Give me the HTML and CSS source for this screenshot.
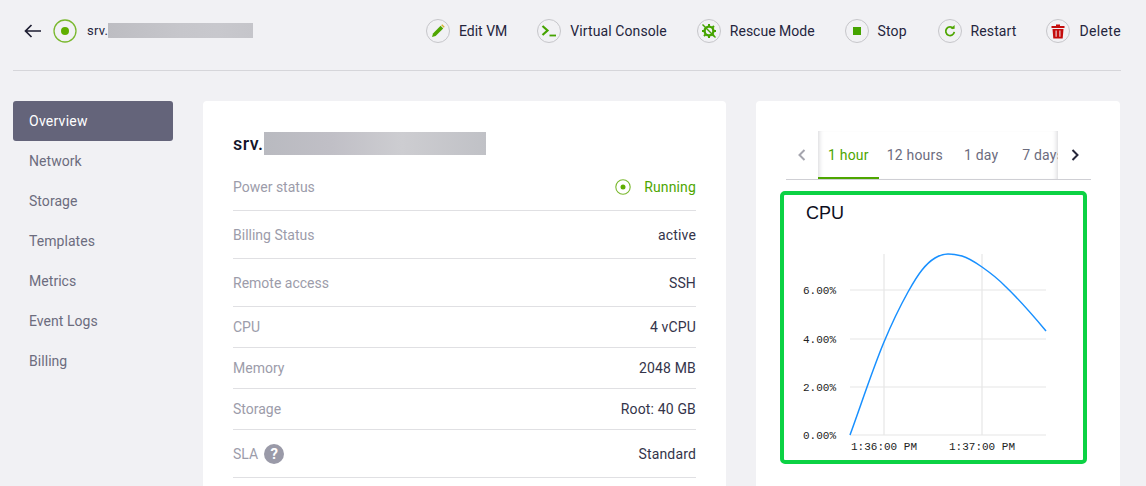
FILE: index.html
```html
<!DOCTYPE html>
<html lang="en">
<head>
<meta charset="utf-8">
<title>VM Overview</title>
<link rel="stylesheet" href="styles.css">
</head>
<body>
<header class="topbar">
  <div class="identity">
    <svg class="back" width="18" height="14" viewBox="0 0 18 14"><path d="M17 7H2M7.5 1 1.5 7l6 6" fill="none" stroke="#1e1e32" stroke-width="1.7"/></svg>
    <svg class="status" width="24" height="24" viewBox="0 0 24 24"><circle cx="12" cy="12" r="11" fill="none" stroke="#7ab82e" stroke-width="1.3"/><circle cx="12" cy="12" r="4" fill="#5fae00"/></svg>
    <span class="host">srv.</span><span class="redact redact-sm"></span>
  </div>
  <nav class="actions">
    <a class="action"><span class="ring"><svg width="14" height="14" viewBox="0 0 14 14"><path d="M1 13l1-3.6L9.6 1.8l2.6 2.6L4.6 12z" fill="#4ea600"/><path d="M10.2 1.2l1-.9 2.5 2.5-.9 1z" fill="#d8b12f"/></svg></span><span class="label label-tight">Edit VM</span></a>
    <a class="action"><span class="ring"><svg width="16" height="14" viewBox="0 0 16 14"><path d="M1.5 2 6.5 6.5l-5 4.5" fill="none" stroke="#45a300" stroke-width="2.2"/><path d="M8.5 11.5H15" stroke="#45a300" stroke-width="1.8"/></svg></span><span class="label">Virtual Console</span></a>
    <a class="action"><span class="ring"><svg width="16" height="16" viewBox="0 0 16 16"><circle cx="8" cy="8" r="4.4" fill="none" stroke="#45a300" stroke-width="2.4"/><path d="M8 1v3M8 12v3M1 8h3M12 8h3M13 3l-2 2M5 11l-2 2M13 13l-2-2" stroke="#45a300" stroke-width="2"/><path d="M1.5 1.5l13 13" stroke="#45a300" stroke-width="1.4"/></svg></span><span class="label label-tight">Rescue Mode</span></a>
    <a class="action action-stop"><span class="ring"><span class="stop-square"></span></span><span class="label">Stop</span></a>
    <a class="action"><span class="ring"><svg width="12" height="12" viewBox="0 0 14 14"><path d="M11 4.2A5 5 0 1 0 12 8" fill="none" stroke="#4ea600" stroke-width="2"/><path d="M7.6 4.4h4.8V0z" fill="#4ea600"/></svg></span><span class="label">Restart</span></a>
    <a class="action"><span class="ring"><svg width="14" height="16" viewBox="0 0 14 16"><path d="M5 1.5h4V3h4.5v2H.5V3H5z" fill="#c40c0c"/><path d="M1.5 6h11l-.8 9.5H2.3zM4.6 7.6v6.2h1V7.6zM8.4 7.6v6.2h1V7.6z" fill="#c40c0c" fill-rule="evenodd"/></svg></span><span class="label label-wide">Delete</span></a>
  </nav>
</header>

<div class="layout">
  <aside class="sidenav">
    <a class="navitem is-active">Overview</a>
    <a class="navitem">Network</a>
    <a class="navitem">Storage</a>
    <a class="navitem">Templates</a>
    <a class="navitem">Metrics</a>
    <a class="navitem">Event Logs</a>
    <a class="navitem">Billing</a>
  </aside>

  <main class="card details">
    <h1 class="title"><span>srv.</span><span class="redact redact-lg"></span></h1>
    <div class="row tall"><span class="key">Power status</span><span class="val running"><svg width="16" height="16" viewBox="0 0 16 16"><circle cx="8" cy="8" r="7.2" fill="none" stroke="#7ab82e" stroke-width="1.1"/><circle cx="8" cy="8" r="2.5" fill="#5fae00"/></svg><span>Running</span></span></div>
    <div class="row tall"><span class="key">Billing Status</span><span class="val">active</span></div>
    <div class="row tall"><span class="key">Remote access</span><span class="val">SSH</span></div>
    <div class="row"><span class="key">CPU</span><span class="val">4 vCPU</span></div>
    <div class="row"><span class="key">Memory</span><span class="val">2048 MB</span></div>
    <div class="row"><span class="key">Storage</span><span class="val">Root: 40 GB</span></div>
    <div class="row tall"><span class="key">SLA <span class="help">?</span></span><span class="val">Standard</span></div>
  </main>

  <section class="card metrics">
    <div class="tabbar">
      <svg class="chev chev-left" width="10" height="12" viewBox="0 0 10 12"><path d="M7.5 1 2.5 6l5 5" fill="none" stroke="#a5a5ae" stroke-width="2"/></svg>
      <div class="tabs">
        <a class="tab is-active">1 hour</a>
        <a class="tab tab-12h">12 hours</a>
        <a class="tab tab-1d">1 day</a>
        <a class="tab tab-7d">7 days</a>
      </div>
      <svg class="chev chev-right" width="10" height="12" viewBox="0 0 10 12"><path d="M2.5 1l5 5-5 5" fill="none" stroke="#26263a" stroke-width="2"/></svg>
    </div>
    <div class="chartbox">
      <div class="charttitle">CPU</div>
      <svg class="chart" width="299" height="224" viewBox="0 0 299 224">
        <g stroke="#e6e6e6" stroke-width="1.2" fill="none">
          <path d="M66 58H262M66 107H262M66 155H262M66 203H262"/>
          <path d="M100 22V203M198 22V203"/>
        </g>
        <path d="M66 203C77.3 172 88.7 137 100 110C108 90.8 116 74.4 124 60C128.7 51.6 133.3 43.8 138 38C142.3 32.6 146.7 28.6 151 26C155.3 23.4 159.7 22 164 22C168.7 22 173.3 22.8 178 24C184.7 25.9 191.3 30.3 198 35C205.7 40.4 213.3 46 221 54C234.7 67 248.3 82.6 262 99" fill="none" stroke="#1890ff" stroke-width="1.5"/>
        <g class="ticks">
          <text x="52" y="62" text-anchor="end">6.00%</text>
          <text x="52" y="111" text-anchor="end">4.00%</text>
          <text x="52" y="159" text-anchor="end">2.00%</text>
          <text x="52" y="207" text-anchor="end">0.00%</text>
          <text x="67" y="218">1:36:00 PM</text>
          <text x="165" y="218">1:37:00 PM</text>
        </g>
      </svg>
    </div>
  </section>
</div>
</body>
</html>
```

FILE: styles.css
```css
html, body {
  margin: 0;
  height: 486px;
  overflow: hidden;
}
body {
  background: #f1f1f4;
  color: #25253d;
  font-family: "Roboto", "Liberation Sans", sans-serif;
  font-size: 14px;
}
a { color: inherit; text-decoration: none; }

.topbar {
  display: flex;
  justify-content: space-between;
  align-items: center;
  height: 71px;
  margin: 0 25px 0 13px;
  padding-bottom: 9px;
  box-sizing: border-box;
  border-bottom: 1px solid #d6d6da;
}
.identity {
  display: flex;
  align-items: center;
  padding-left: 11px;
}
.back { margin-right: 11px; }
.status { margin-right: 10px; }
.host { font-size: 13px; letter-spacing: 0.25px; }
.redact { display: inline-block; }
.redact-sm {
  width: 145px;
  height: 15px;
  background: linear-gradient(90deg, #bdbdc2, #c6c6cb 50%, #c8c8cd 75%, #c5c5ca);
}
.redact-lg {
  width: 222px;
  height: 23px;
  background: linear-gradient(90deg, #b9bac0, #c0bfc6 30%, #cdcdd1 62%, #c0c1c6);
}

.actions { display: flex; gap: 30px; }
.action { display: flex; align-items: center; gap: 9px; line-height: 24px; letter-spacing: 0.1px; }
.action-stop { margin-right: 1px; }
.ring {
  display: flex;
  align-items: center;
  justify-content: center;
  width: 24px;
  height: 24px;
  box-sizing: border-box;
  border: 1px solid #c6c6ca;
  border-radius: 50%;
}
.stop-square { width: 8px; height: 8px; background: #45a300; }
.label { white-space: nowrap; }
.label-wide { letter-spacing: 0.35px; }
.label-tight { letter-spacing: 0; }

.layout {
  display: flex;
  gap: 30px;
  align-items: flex-start;
  padding: 30px 26px 0 13px;
}
.sidenav { width: 160px; flex: none; }
.navitem {
  display: flex;
  align-items: center;
  height: 40px;
  padding-left: 16px;
  color: #6c6c7e;
  letter-spacing: 0.05px;
}
.navitem.is-active {
  background: #64647a;
  color: #fff;
  border-radius: 3px;
  letter-spacing: 0.25px;
}

.card {
  background: #fff;
  border-radius: 4px;
  box-sizing: border-box;
  height: 420px;
}
.details { width: 523px; flex: none; padding: 30px 30px 0; }
.title {
  display: flex;
  align-items: center;
  margin: 0 0 7px;
  font-size: 18px;
  line-height: 25px;
  font-weight: 500;
  color: #14142a;
  letter-spacing: 0.5px;
}
.row {
  display: flex;
  justify-content: space-between;
  align-items: center;
  height: 41px;
  box-sizing: border-box;
  border-bottom: 1px solid #e0e0e3;
}
.row.tall { height: 48px; }
.key { display: flex; align-items: center; gap: 6px; color: #9c9caa; }
.val { color: #34344a; letter-spacing: 0.15px; }
.running { display: flex; align-items: center; gap: 13px; color: #4ea600; }
.help {
  display: flex;
  align-items: center;
  justify-content: center;
  width: 20px;
  height: 20px;
  border-radius: 50%;
  background: #9a9aa8;
  color: #fff;
  font-weight: 700;
  font-size: 15px;
}

.metrics { width: 364px; flex: none; padding: 30px 29px 0 24px; }
.tabbar {
  display: flex;
  align-items: stretch;
  height: 49px;
  margin-left: 6px;
  border-bottom: 1px solid #cfcfd4;
  box-sizing: border-box;
}
.chev { flex: none; align-self: center; }
.chev-left { margin: 0 11px; }
.chev-right { margin: 0 11px 0 12px; }
.tabs {
  display: flex;
  flex: 1;
  min-width: 0;
  overflow: hidden;
  box-shadow: inset 5px 0 5px -4px #d4d4d8, inset -5px 0 5px -4px #d4d4d8;
}
.tab {
  display: flex;
  flex: none;
  align-items: center;
  padding: 0 10px;
  height: 48px;
  box-sizing: border-box;
  color: #6c6c7e;
  letter-spacing: 0.2px;
}
.tab-12h { margin-left: -2px; }
.tab-1d { margin-left: 1px; }
.tab-7d { margin-left: 4px; }
.tab.is-active {
  color: #4ea600;
  padding-top: 2px;
  border-bottom: 2px solid #4ea600;
}

.chartbox {
  width: 307px;
  height: 273px;
  margin-top: 11px;
  box-sizing: border-box;
  border: 4px solid #0cd244;
  border-radius: 5px;
  padding-top: 6px;
}
.charttitle {
  font-family: "Liberation Sans", sans-serif;
  font-size: 18px;
  line-height: 24px;
  margin: 0 0 7px 22px;
  color: #0d0d20;
}
.chart { display: block; }
.ticks text {
  font-family: "Liberation Mono", monospace;
  font-size: 11px;
  fill: #222;
}
```
